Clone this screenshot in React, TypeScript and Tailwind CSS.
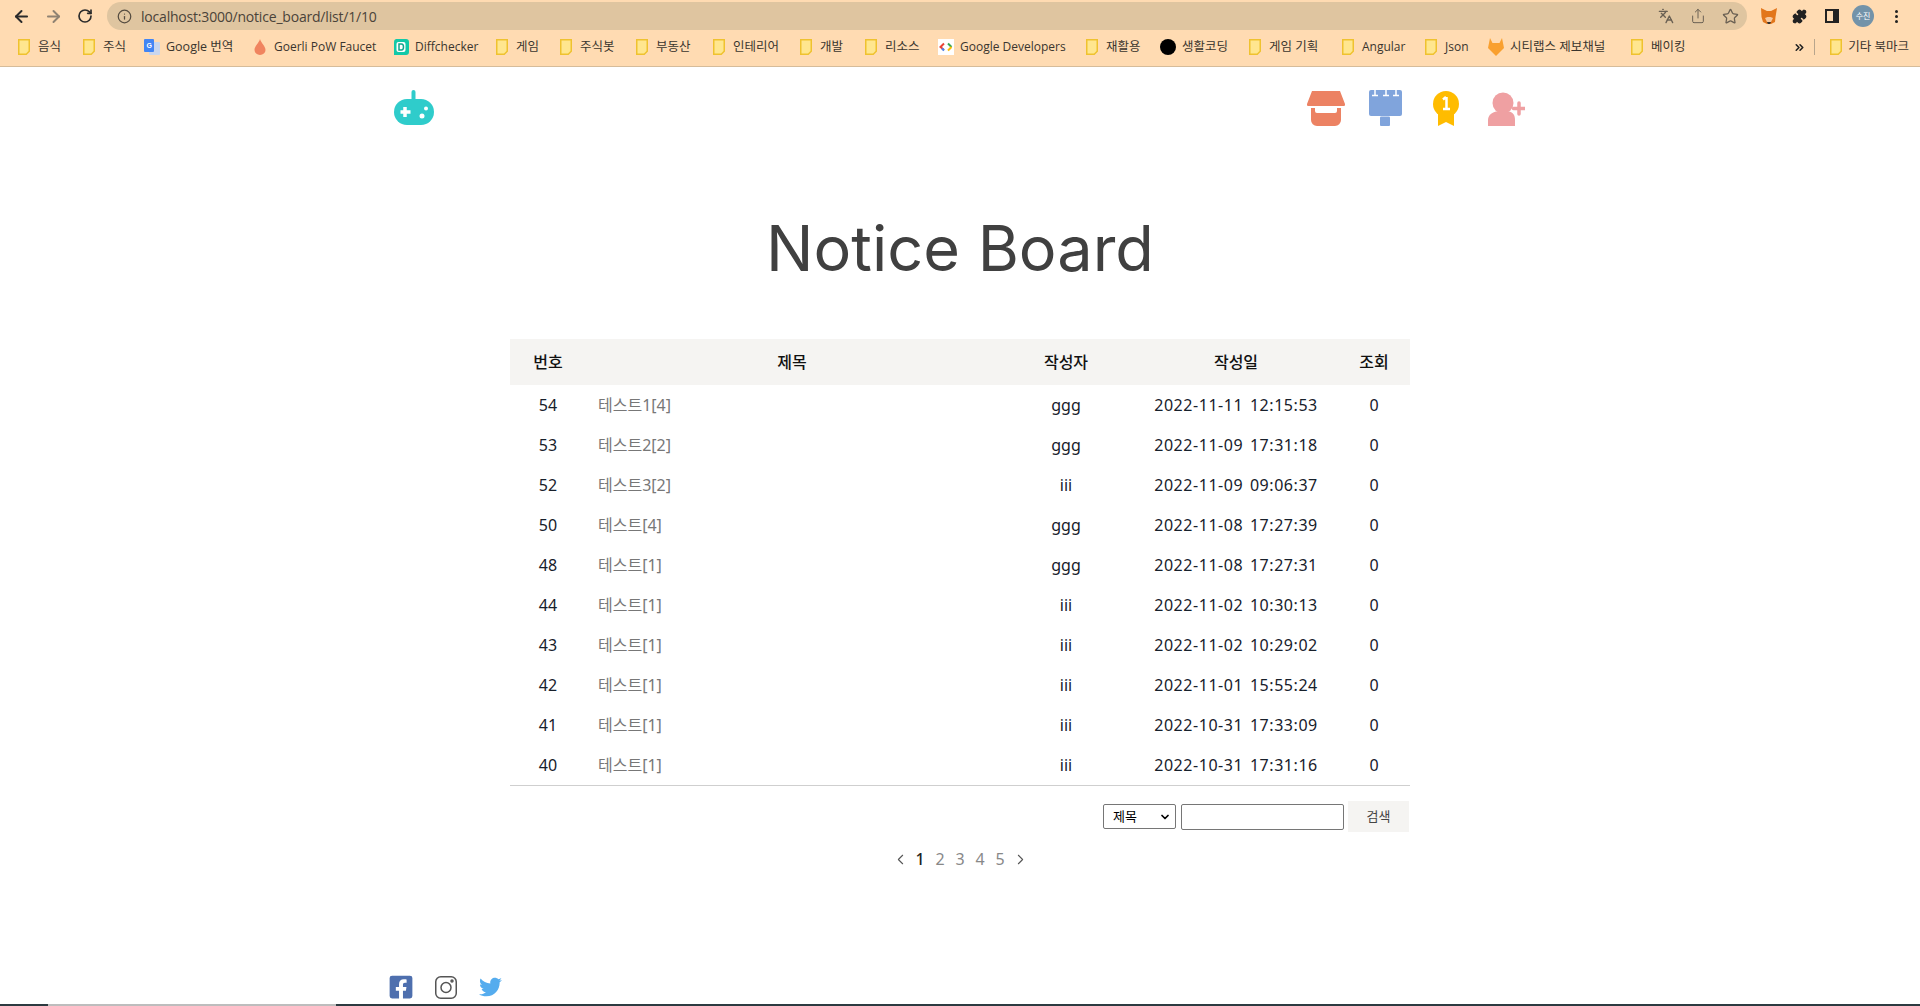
import { ArrowLeft, ArrowRight, RotateCw, Info, Share, Star, ChevronLeft, ChevronRight, ChevronDown, ChevronsRight, Puzzle, Languages } from 'lucide-react';
import { FaFacebookSquare, FaTwitter } from 'react-icons/fa';

const rows = [
  { no: 54, title: '테스트1[4]', author: 'ggg', date: '2022-11-11 12:15:53' },
  { no: 53, title: '테스트2[2]', author: 'ggg', date: '2022-11-09 17:31:18' },
  { no: 52, title: '테스트3[2]', author: 'iii', date: '2022-11-09 09:06:37' },
  { no: 50, title: '테스트[4]', author: 'ggg', date: '2022-11-08 17:27:39' },
  { no: 48, title: '테스트[1]', author: 'ggg', date: '2022-11-08 17:27:31' },
  { no: 44, title: '테스트[1]', author: 'iii', date: '2022-11-02 10:30:13' },
  { no: 43, title: '테스트[1]', author: 'iii', date: '2022-11-02 10:29:02' },
  { no: 42, title: '테스트[1]', author: 'iii', date: '2022-11-01 15:55:24' },
  { no: 41, title: '테스트[1]', author: 'iii', date: '2022-10-31 17:33:09' },
  { no: 40, title: '테스트[1]', author: 'iii', date: '2022-10-31 17:31:16' },
];

function Folder() {
  return (
    <svg width="12" height="16" viewBox="0 0 12 16" className="shrink-0">
      <path d="M0.75 0.75h10.5v11.5l-3 3H0.75z" fill="#FFE68F" stroke="#EFC22F" strokeWidth="1.5" />
    </svg>
  );
}

function GoogleTranslate() {
  return (
    <svg width="16" height="16" viewBox="0 0 16 16">
      <rect x="5" y="3" width="11" height="13" rx="1" fill="#C9D6EE" />
      <rect x="0" y="0" width="10" height="13" rx="1" fill="#4285F4" />
      <text x="2.5" y="9" fontSize="7" fontWeight="700" fill="#fff" fontFamily="Liberation Sans, sans-serif">G</text>
    </svg>
  );
}

function Drop() {
  return (
    <svg width="12" height="16" viewBox="0 0 12 16">
      <path d="M6 0C7 4 11.500 7 11.500 11A5.500 5 0 0 1 .5 11C.5 7 5 4 6 0z" fill="#F0845F" />
    </svg>
  );
}

function Diff() {
  return (
    <svg width="16" height="16" viewBox="0 0 16 16">
      <path d="M3 0h10a3 3 0 0 1 3 3v10a3 3 0 0 1-3 3H1V3a3 3 0 0 1 2-3z" fill="#12C9A8" />
      <rect x="3.500" y="3" width="9" height="10" rx="2" fill="#fff" />
      <path d="M6 5h2.500a2 3 0 0 1 0 6H6z" fill="none" stroke="#12A58C" strokeWidth="1.500" />
    </svg>
  );
}

function GoogleDev() {
  return (
    <svg width="16" height="16" viewBox="0 0 16 16">
      <rect width="16" height="16" fill="#fff" />
      <path d="M6 4.500L2.500 8 6 11" fill="none" stroke="#EA4335" strokeWidth="2" />
      <path d="M4 9.500L6 11.500" fill="none" stroke="#4285F4" strokeWidth="2" />
      <path d="M10 4.500L13.500 8" fill="none" stroke="#34A853" strokeWidth="2" />
      <path d="M13.500 8L10 11.500" fill="none" stroke="#FBBC04" strokeWidth="2" />
    </svg>
  );
}

function Gitlab() {
  return (
    <svg width="16" height="18" viewBox="0 0 16 18">
      <path d="M2 0l2.500 5h7L14 0l2 10-8 8-8-8z" fill="#F9A02F" />
    </svg>
  );
}

const bookmarks = [
  { label: '음식', icon: <Folder />, width: 'w-[65px]', size: 'text-[12.5px]' },
  { label: '주식', icon: <Folder />, width: 'w-[63px]', size: 'text-[12.5px]' },
  { label: 'Google 번역', icon: <GoogleTranslate />, width: 'w-[108px]', size: 'text-[12.5px]' },
  { label: 'Goerli PoW Faucet', icon: <Drop />, width: 'w-[141px]', size: 'text-[12px]' },
  { label: 'Diffchecker', icon: <Diff />, width: 'w-[101px]', size: 'text-[12px]' },
  { label: '게임', icon: <Folder />, width: 'w-[64px]', size: 'text-[12.5px]' },
  { label: '주식봇', icon: <Folder />, width: 'w-[76px]', size: 'text-[12.5px]' },
  { label: '부동산', icon: <Folder />, width: 'w-[77px]', size: 'text-[12.5px]' },
  { label: '인테리어', icon: <Folder />, width: 'w-[87px]', size: 'text-[12.5px]' },
  { label: '개발', icon: <Folder />, width: 'w-[65px]', size: 'text-[12.5px]' },
  { label: '리소스', icon: <Folder />, width: 'w-[75px]', size: 'text-[12.5px]' },
  { label: 'Google Developers', icon: <GoogleDev />, width: 'w-[146px]', size: 'text-[12px]' },
  { label: '재활용', icon: <Folder />, width: 'w-[76px]', size: 'text-[12.5px]' },
  { label: '생활코딩', icon: <span className="block h-4 w-4 rounded-full bg-black" />, width: 'w-[87px]', size: 'text-[12.5px]' },
  { label: '게임 기획', icon: <Folder />, width: 'w-[93px]', size: 'text-[12.5px]' },
  { label: 'Angular', icon: <Folder />, width: 'w-[83px]', size: 'text-[12px]' },
  { label: 'Json', icon: <Folder />, width: 'w-[65px]', size: 'text-[12px]' },
  { label: '시티랩스 제보채널', icon: <Gitlab />, width: 'w-[141px]', size: 'text-[12.5px]' },
  { label: '베이킹', icon: <Folder />, width: 'w-[76px]', size: 'text-[12.5px]' },
];

function Fox() {
  return (
    <svg width="18" height="18" viewBox="0 0 18 18">
      <path d="M1 1l6 3h4l6-3-1.500 9L15 15l-4 2H7l-4-2-1.500-5z" fill="#E2761B" />
      <path d="M5 11l2 4h4l2-4-2.500-1h-3z" fill="#F6C9A0" />
      <path d="M7 15h4l-1 2H8z" fill="#333" />
    </svg>
  );
}

function StoreIcon() {
  return (
    <svg width="38" height="35" viewBox="0 0 38 35">
      <path d="M5 0h28l5 13a1.500 1.500 0 0 1-1.500 2h-35A1.500 1.500 0 0 1 0 13z" fill="#EC8263" />
      <path d="M4 17h4v3a2 2 0 0 0 2 2h18a2 2 0 0 0 2-2v-3h4v12a6 6 0 0 1-6 6H10a6 6 0 0 1-6-6z" fill="#EC8263" />
    </svg>
  );
}

function BoardIcon() {
  return (
    <svg width="33" height="36" viewBox="0 0 33 36">
      <path d="M2 0h29a2 2 0 0 1 2 2v22a2 2 0 0 1-2 2H2a2 2 0 0 1-2-2V2a2 2 0 0 1 2-2z" fill="#80A4DC" />
      <rect x="11" y="26.500" width="10" height="9.500" rx="1" fill="#80A4DC" />
      <path d="M6 0v5M17 0v5M27 0v5M3 5.500h6M14 5.500h6M24 5.500h6" stroke="#fff" strokeWidth="1.500" />
    </svg>
  );
}

function MedalIcon() {
  return (
    <svg width="26" height="35" viewBox="0 0 26 35">
      <path d="M5 19v16l8-4 8 4V19z" fill="#FFBC00" />
      <circle cx="13" cy="13" r="13" fill="#FFBC00" />
      <path d="M13.500 6v12M10 8.500l3-2.500M10 18h7" stroke="#fff" strokeWidth="2.500" fill="none" />
    </svg>
  );
}

function AddUserIcon() {
  return (
    <svg width="37" height="34" viewBox="0 0 37 34">
      <circle cx="15" cy="11" r="10.500" fill="#EFA0A2" />
      <path d="M0 34v-6c0-6 6-9 13-9h4c7 0 10 3 10 9v6z" fill="#EFA0A2" />
      <path d="M31 11v11M25.500 16.500h11" stroke="#EFA0A2" strokeWidth="3.500" strokeLinecap="round" />
    </svg>
  );
}

function GamepadLogo() {
  return (
    <svg width="40" height="36" viewBox="0 0 40 36">
      <rect x="17.500" y="0" width="4" height="12" rx="2" fill="#2FCCCB" />
      <rect x="0" y="9" width="40" height="26" rx="13" fill="#2FCCCB" />
      <path d="M11 17v10M6.500 22h10" stroke="#fff" strokeWidth="3.500" />
      <circle cx="32" cy="18.500" r="2" fill="#fff" />
      <circle cx="28" cy="26" r="2.500" fill="#fff" />
    </svg>
  );
}

function Instagram() {
  return (
    <svg width="22" height="23" viewBox="0 0 22 23" fill="none" stroke="#555" strokeWidth="1.500">
      <rect x="0.750" y="0.750" width="20.500" height="21.500" rx="5" />
      <circle cx="11" cy="11.500" r="5" />
      <circle cx="17" cy="5" r="1" />
    </svg>
  );
}

export default function App() {
  return (
    <div className="h-[1006px] w-[1920px] overflow-hidden bg-white font-['Noto_Sans','Noto_Sans_CJK_KR',sans-serif] relative">
      {/* 브라우저 상단 */}
      <div className="h-[67px] border-b border-[#D6BC9A] bg-[#FFDBB2]">
        <div className="flex h-[32px] items-center pl-[12px]">
          <ArrowLeft className="h-[19px] w-[19px] text-[#2b2b2b]" strokeWidth={2.500} />
          <ArrowRight className="ml-[13px] h-[19px] w-[19px] text-[#8f8272]" strokeWidth={2.500} />
          <RotateCw className="ml-[14px] h-[16px] w-[16px] text-[#2b2b2b]" strokeWidth={2.500} />
          <div className="ml-[14px] flex h-[28px] w-[1640px] items-center rounded-full bg-[#DFC5A0] pl-[10px] pr-[8px] font-['Open_Sans','Noto_Sans_CJK_KR',sans-serif]">
            <Info className="h-[15px] w-[15px] text-[#554c40]" strokeWidth={2} />
            <span className="ml-[9px] text-[14px] text-[#4a4339] tracking-[-0.2px]">localhost:3000/notice_board/list/1/10</span>
            <div className="ml-auto flex items-center gap-[16px] text-[#6a6053]">
              <Languages className="h-[16px] w-[16px]" strokeWidth={2} />
              <Share className="h-[16px] w-[16px]" strokeWidth={1.500} />
              <Star className="h-[17px] w-[17px]" strokeWidth={1.800} />
            </div>
          </div>
          <div className="ml-[13px]"><Fox /></div>
          <Puzzle className="ml-[14px] h-[15px] w-[15px] fill-[#222] text-[#222]" />
          <span className="ml-[18px] h-[14px] w-[14px] border-[2px] border-r-[6px] border-[#222]" />
          <span className="ml-[13px] flex h-[22px] w-[22px] items-center justify-center rounded-full bg-[#7393A9] text-[8px] text-white">수진</span>
          <span className="ml-[21px] flex flex-col gap-[2px]">
            <i className="block h-[3px] w-[3px] rounded-full bg-[#222]" />
            <i className="block h-[3px] w-[3px] rounded-full bg-[#222]" />
            <i className="block h-[3px] w-[3px] rounded-full bg-[#222]" />
          </span>
        </div>
        <div className="flex h-[30px] items-center pl-[16px] pr-[11px] text-[12.5px] text-[#3a352e]">
          {bookmarks.map((b) => (
            <div key={b.label} className={`flex shrink-0 items-center gap-[6px] whitespace-nowrap ${b.width}`}>
              <span className="flex w-[16px] justify-center">{b.icon}</span>
              <span className={`font-['Open_Sans','Noto_Sans_CJK_KR',sans-serif] ${b.size}`}>{b.label}</span>
            </div>
          ))}
          <ChevronsRight className="ml-auto h-[13px] w-[13px] text-[#222]" strokeWidth={3} />
          <span className="ml-[8px] h-[16px] w-px bg-[#b8a58c]" />
          <div className="ml-[15px] flex items-center gap-[6px] font-['Open_Sans','Noto_Sans_CJK_KR',sans-serif]">
            <Folder />
            <span>기타 북마크</span>
          </div>
        </div>
      </div>

      {/* 헤더 */}
      <header className="flex h-[59px] items-end justify-between pl-[394px] pr-[395px]">
        <GamepadLogo />
        <div className="flex items-end">
          <StoreIcon />
          <span className="ml-[24px]"><BoardIcon /></span>
          <span className="ml-[31px]"><MedalIcon /></span>
          <span className="ml-[29px]"><AddUserIcon /></span>
        </div>
      </header>

      <h1 className="mt-[82px] text-center font-['Inter',sans-serif] text-[63px] leading-[80px] font-normal text-[#404040]">Notice Board</h1>

      {/* 게시판 */}
      <div className="mx-auto mt-[51px] w-[900px]">
        <div className="grid h-[46px] grid-cols-[76px_412px_136px_204px_72px] items-center bg-[#F5F4F2] text-center text-[16px] font-medium text-[#111]">
          <div>번호</div>
          <div>제목</div>
          <div>작성자</div>
          <div>작성일</div>
          <div>조회</div>
        </div>
        <div className="border-b border-[#cfcfcf] text-[16px] text-[#17202b]">
          {rows.map((row) => (
            <div key={row.no} className="grid h-[40px] grid-cols-[76px_412px_136px_204px_72px] items-center pb-[1px] text-center">
              <div>{row.no}</div>
              <div className="pl-[12px] text-left text-[16px] text-[#777]">{row.title}</div>
              <div>{row.author}</div>
              <div className="whitespace-nowrap tracking-[0.55px] [word-spacing:2px]">{row.date}</div>
              <div>0</div>
            </div>
          ))}
        </div>
        <div className="mt-[15px] flex h-[31px] items-center justify-end pr-[1px] text-[13px]">
          <div className="relative flex h-[25px] w-[73px] items-center rounded-[2px] border border-[#767676] pl-[9px] text-black">
            제목
            <ChevronDown className="absolute right-[4px] h-[12px] w-[12px]" strokeWidth={3.500} />
          </div>
          <input className="ml-[5px] h-[26px] w-[163px] rounded-[2px] border border-[#767676] bg-white" />
          <button className="ml-[4px] h-[31px] w-[61px] bg-[#F5F4F2] text-[#444]">검색</button>
        </div>
        <div className="mt-[15px] flex items-center justify-center text-[16px] leading-[24px] text-[#888]">
          <span className="flex w-[20px] justify-center"><ChevronLeft className="h-[17px] w-[17px] text-[#555]" strokeWidth={1.500} /></span>
          <span className="w-[20px] text-center font-medium text-[#222]">1</span>
          <span className="w-[20px] text-center">2</span>
          <span className="w-[20px] text-center">3</span>
          <span className="w-[20px] text-center">4</span>
          <span className="w-[20px] text-center">5</span>
          <span className="flex w-[20px] justify-center"><ChevronRight className="h-[17px] w-[17px] text-[#555]" strokeWidth={1.500} /></span>
        </div>
      </div>

      {/* 푸터 */}
      <footer className="absolute bottom-[6px] left-[389px] flex items-center gap-[22px]">
        <FaFacebookSquare className="h-[26px] w-[24px] text-[#4E6FAE]" />
        <Instagram />
        <FaTwitter className="h-[24px] w-[23px] text-[#55ACEE]" />
      </footer>
      <div className="absolute bottom-0 left-0 flex h-[2px] w-full bg-[#2c3a40]">
        <span className="ml-[48px] w-[288px] bg-[#bdbdbd]" />
      </div>
    </div>
  );
}
